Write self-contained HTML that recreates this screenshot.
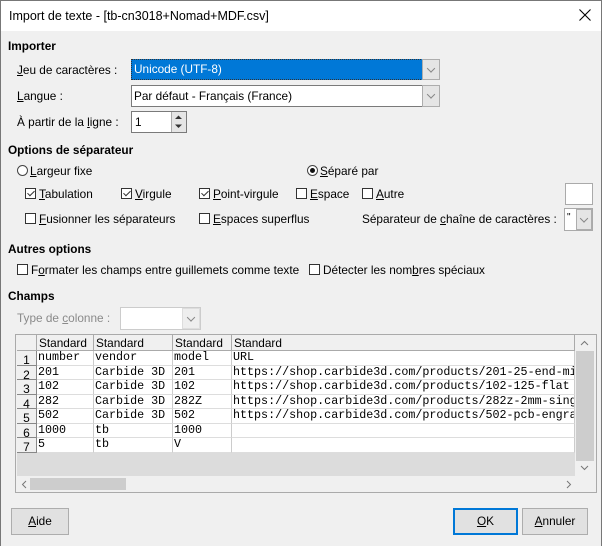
<!DOCTYPE html>
<html><head><meta charset="utf-8"><style>
*{box-sizing:border-box;margin:0;padding:0}
body{width:602px;height:546px;background:#f0f0f0;font-family:"Liberation Sans",sans-serif;font-size:11.8px;color:#000;position:relative;overflow:hidden}
.a{position:absolute;white-space:nowrap}
.b{font-weight:bold}
.t{line-height:14px}
.cb{position:absolute;width:11px;height:11px;border:1px solid #333;background:#fff}
.cb.c::after{content:"";position:absolute;left:3px;top:0px;width:3px;height:6px;border:solid #333;border-width:0 1px 1px 0;transform:rotate(45deg)}
.box{position:absolute;background:#fff;border:1px solid #7a7a7a}
.dd{position:absolute;background:#e5e5e5;border:1px solid #adadad}
.dd::after{content:"";position:absolute;left:50%;top:50%;width:5px;height:5px;border:solid #888;border-width:0 1px 1px 0;transform:translate(-50%,-75%) rotate(45deg)}
.btn{position:absolute;background:#e1e1e1;border:1px solid #adadad;text-align:center;line-height:24px}
u{text-decoration:underline}
.mono{font-family:"Liberation Mono",monospace;font-size:11.7px}
.cell{position:absolute;line-height:13px;border-right:1px solid #ccc;border-bottom:1px solid #ddd;background:#fff;overflow:hidden;white-space:nowrap;padding-left:1px}
.hd{position:absolute;height:16px;line-height:16px;border-right:1px solid #aaa;border-bottom:1px solid #aaa;background:#f0f0f0;padding-left:2px;overflow:hidden;white-space:nowrap}
.rn{position:absolute;left:17px;width:20px;border-right:1px solid #888;border-bottom:1px solid #888;background:#f0f0f0;text-align:center;font-size:12px;line-height:18px;overflow:hidden}
</style></head><body>
<div class="a" style="left:0;top:0;width:602px;height:31px;background:#fff;border:1px solid #777;border-bottom:none"></div>
<div class="a" style="left:0;top:0;width:1px;height:546px;background:#777"></div>
<div class="a" style="left:601px;top:0;width:1px;height:546px;background:#777"></div>
<div class="a t" style="left:9px;top:9px;font-size:12.5px">Import de texte - [tb-cn3018+Nomad+MDF.csv]</div>
<svg class="a" style="left:579px;top:9px" width="12" height="12"><path d="M0.5 0.5L11.5 11.5M11.5 0.5L0.5 11.5" stroke="#000" stroke-width="1.1"/></svg>

<div class="a t b" style="left:8px;top:39px">Importer</div>
<div class="a t" style="left:17px;top:63px"><u>J</u>eu de caractères :</div>
<div class="a" style="left:131px;top:59px;width:292px;height:21px;background:#0078d7;border:1px dotted #333"></div>
<div class="a t" style="left:134px;top:62px;color:#fff">Unicode (UTF-8)</div>
<div class="dd" style="left:422px;top:59px;width:18px;height:21px"></div>
<div class="a t" style="left:17px;top:89px"><u>L</u>angue :</div>
<div class="box" style="left:131px;top:85px;width:309px;height:22px"></div>
<div class="a t" style="left:134px;top:89px">Par défaut - Français (France)</div>
<div class="dd" style="left:422px;top:85px;width:18px;height:22px"></div>
<div class="a t" style="left:17px;top:115px">À partir de la <u>l</u>igne :</div>
<div class="box" style="left:131px;top:111px;width:56px;height:22px"></div>
<div class="a t" style="left:135px;top:115px">1</div>
<div class="a" style="left:171px;top:112px;width:15px;height:20px;background:#e5e5e5;border-left:1px solid #aaa"></div>
<svg class="a" style="left:174px;top:114px" width="9" height="16"><path d="M1 5L4.5 1.5L8 5Z M1 10.5L4.5 14L8 10.5Z" fill="#333"/></svg>

<div class="a t b" style="left:8px;top:143px">Options de séparateur</div>
<div class="a" style="left:17px;top:165px;width:11px;height:11px;border:1px solid #444;border-radius:50%;background:#fff"></div>
<div class="a t" style="left:30px;top:164px"><u>L</u>argeur fixe</div>
<div class="a" style="left:307px;top:165px;width:11px;height:11px;border:1px solid #444;border-radius:50%;background:#fff"></div>
<div class="a" style="left:310px;top:168px;width:5px;height:5px;border-radius:50%;background:#111"></div>
<div class="a t" style="left:320px;top:164px"><u>S</u>éparé par</div>

<div class="cb c" style="left:25px;top:188px"></div><div class="a t" style="left:39px;top:187px"><u>T</u>abulation</div>
<div class="cb c" style="left:121px;top:188px"></div><div class="a t" style="left:135px;top:187px"><u>V</u>irgule</div>
<div class="cb c" style="left:199px;top:188px"></div><div class="a t" style="left:213px;top:187px"><u>P</u>oint-virgule</div>
<div class="cb" style="left:296px;top:188px"></div><div class="a t" style="left:310px;top:187px"><u>E</u>space</div>
<div class="cb" style="left:362px;top:188px"></div><div class="a t" style="left:376px;top:187px"><u>A</u>utre</div>
<div class="box" style="left:565px;top:183px;width:28px;height:22px;border-color:#aaa"></div>

<div class="cb" style="left:25px;top:213px"></div><div class="a t" style="left:39px;top:212px"><u>F</u>usionner les séparateurs</div>
<div class="cb" style="left:199px;top:213px"></div><div class="a t" style="left:213px;top:212px"><u>E</u>spaces superflus</div>
<div class="a t" style="left:362px;top:212px">Séparateur de <u>c</u>haîne de caractères :</div>
<div class="box" style="left:564px;top:208px;width:29px;height:23px;border-color:#aaa"></div>
<div class="a t" style="left:567px;top:211px;font-size:10px">"</div>
<div class="dd" style="left:576px;top:209px;width:16px;height:21px"></div>

<div class="a t b" style="left:8px;top:242px">Autres options</div>
<div class="cb" style="left:17px;top:264px"></div><div class="a t" style="left:31px;top:263px">F<u>o</u>rmater les champs entre guillemets comme texte</div>
<div class="cb" style="left:309px;top:264px"></div><div class="a t" style="left:323px;top:263px">Détecter les nom<u>b</u>res spéciaux</div>

<div class="a t b" style="left:8px;top:289px">Champs</div>
<div class="a t" style="left:17px;top:311px;color:#8a8a8a">Type de <u>c</u>olonne :</div>
<div class="box" style="left:120px;top:307px;width:81px;height:23px;border-color:#ccc"></div>
<div class="dd" style="left:182px;top:308px;width:18px;height:21px;background:#eee;border-color:#ddd"></div>

<div class="a" style="left:15px;top:334px;width:582px;height:159px;border:1px solid #aaa;background:#f0f0f0"></div>
<div class="a" style="left:17px;top:335px;width:20px;height:16px;background:#f0f0f0;border-right:1px solid #aaa;border-bottom:1px solid #aaa"></div>
<div class="hd" style="left:37px;top:335px;width:57px">Standard</div>
<div class="hd" style="left:94px;top:335px;width:79px">Standard</div>
<div class="hd" style="left:173px;top:335px;width:59px">Standard</div>
<div class="hd" style="left:232px;top:335px;width:343px">Standard</div>
<div class="a" style="left:17px;top:351px;width:558px;height:102px;background:#fff"></div>
<div class="rn" style="top:351px;height:15px">1</div><div class="rn" style="top:366px;height:14px">2</div><div class="rn" style="top:380px;height:15px">3</div><div class="rn" style="top:395px;height:14px">4</div><div class="rn" style="top:409px;height:15px">5</div><div class="rn" style="top:424px;height:14px">6</div><div class="rn" style="top:438px;height:15px">7</div>

<div class="mono">
<div class="cell" style="left:37px;top:351px;height:15px;width:57px">number</div><div class="cell" style="left:94px;top:351px;height:15px;width:79px">vendor</div><div class="cell" style="left:173px;top:351px;height:15px;width:59px">model</div><div class="cell" style="left:232px;top:351px;height:15px;width:343px">URL</div>
<div class="cell" style="left:37px;top:366px;height:14px;width:57px">201</div><div class="cell" style="left:94px;top:366px;height:14px;width:79px">Carbide 3D</div><div class="cell" style="left:173px;top:366px;height:14px;width:59px">201</div><div class="cell" style="left:232px;top:366px;height:14px;width:343px">https://shop.carbide3d.com/products/201-25-end-mi</div>
<div class="cell" style="left:37px;top:380px;height:15px;width:57px">102</div><div class="cell" style="left:94px;top:380px;height:15px;width:79px">Carbide 3D</div><div class="cell" style="left:173px;top:380px;height:15px;width:59px">102</div><div class="cell" style="left:232px;top:380px;height:15px;width:343px">https://shop.carbide3d.com/products/102-125-flat</div>
<div class="cell" style="left:37px;top:395px;height:14px;width:57px">282</div><div class="cell" style="left:94px;top:395px;height:14px;width:79px">Carbide 3D</div><div class="cell" style="left:173px;top:395px;height:14px;width:59px">282Z</div><div class="cell" style="left:232px;top:395px;height:14px;width:343px">https://shop.carbide3d.com/products/282z-2mm-sing</div>
<div class="cell" style="left:37px;top:409px;height:15px;width:57px">502</div><div class="cell" style="left:94px;top:409px;height:15px;width:79px">Carbide 3D</div><div class="cell" style="left:173px;top:409px;height:15px;width:59px">502</div><div class="cell" style="left:232px;top:409px;height:15px;width:343px">https://shop.carbide3d.com/products/502-pcb-engra</div>
<div class="cell" style="left:37px;top:424px;height:14px;width:57px">1000</div><div class="cell" style="left:94px;top:424px;height:14px;width:79px">tb</div><div class="cell" style="left:173px;top:424px;height:14px;width:59px">1000</div><div class="cell" style="left:232px;top:424px;height:14px;width:343px"></div>
<div class="cell" style="left:37px;top:438px;height:15px;width:57px">5</div><div class="cell" style="left:94px;top:438px;height:15px;width:79px">tb</div><div class="cell" style="left:173px;top:438px;height:15px;width:59px">V</div><div class="cell" style="left:232px;top:438px;height:15px;width:343px"></div>
</div>
<div class="a" style="left:17px;top:453px;width:558px;height:23px;background:#dcdcdc"></div>
<div class="a" style="left:575px;top:335px;width:21px;height:141px;background:#f0f0f0"></div>
<div class="a" style="left:576px;top:351px;width:18px;height:110px;background:#cdcdcd"></div>
<svg class="a" style="left:580px;top:340px" width="9" height="6"><path d="M1 5L4.5 1.5L8 5" stroke="#777" fill="none"/></svg>
<svg class="a" style="left:580px;top:465px" width="9" height="6"><path d="M1 1L4.5 4.5L8 1" stroke="#777" fill="none"/></svg>
<div class="a" style="left:17px;top:476px;width:558px;height:16px;background:#f0f0f0"></div>
<div class="a" style="left:30px;top:478px;width:96px;height:12px;background:#cdcdcd"></div>
<svg class="a" style="left:21px;top:480px" width="6" height="9"><path d="M5 1L1.5 4.5L5 8" stroke="#777" fill="none"/></svg>
<svg class="a" style="left:566px;top:480px" width="6" height="9"><path d="M1 1L4.5 4.5L1 8" stroke="#777" fill="none"/></svg>

<div class="btn" style="left:11px;top:508px;width:58px;height:27px"><u>A</u>ide</div>
<div class="btn" style="left:453px;top:508px;width:65px;height:27px;border:2px solid #0078d7;line-height:22px"><u>O</u>K</div>
<div class="btn" style="left:522px;top:508px;width:66px;height:27px"><u>A</u>nnuler</div>
</body></html>
